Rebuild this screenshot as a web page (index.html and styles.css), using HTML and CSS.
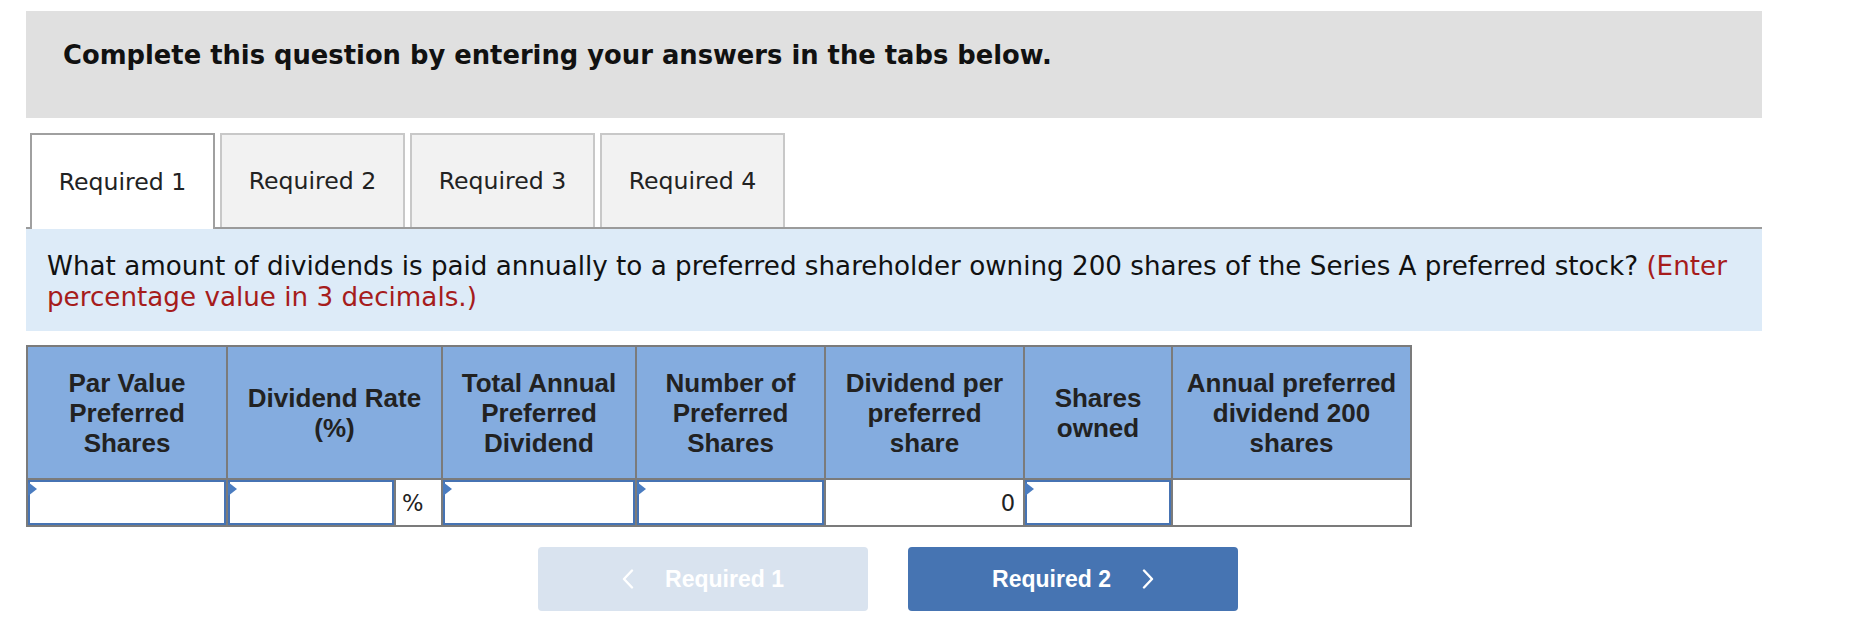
FILE: index.html
```html
<!DOCTYPE html>
<html lang="en">
<head>
<meta charset="utf-8">
<title>Required 1</title>
<link rel="stylesheet" href="styles.css">
</head>
<body>
<div class="page">
  <div class="instructions">Complete this question by entering your answers in the tabs below.</div>
  <div class="tabs">
    <div class="tab active">Required 1</div>
    <div class="tab">Required 2</div>
    <div class="tab">Required 3</div>
    <div class="tab">Required 4</div>
  </div>
  <div class="question">What amount of dividends is paid annually to a preferred shareholder owning 200 shares of the Series A preferred stock? <span class="hint">(Enter percentage value in 3 decimals.)</span></div>
  <table class="grid">
    <colgroup>
      <col class="c1"><col class="c2a"><col class="c2b"><col class="c3"><col class="c4"><col class="c5"><col class="c6"><col class="c7">
    </colgroup>
    <thead>
      <tr>
        <th>Par Value<br>Preferred<br>Shares</th>
        <th colspan="2">Dividend Rate<br>(%)</th>
        <th>Total Annual<br>Preferred<br>Dividend</th>
        <th>Number of<br>Preferred<br>Shares</th>
        <th>Dividend per<br>preferred<br>share</th>
        <th>Shares<br>owned</th>
        <th>Annual preferred<br>dividend 200<br>shares</th>
      </tr>
    </thead>
    <tbody>
      <tr>
        <td><div class="field"></div></td>
        <td><div class="field"></div></td>
        <td class="pct">%</td>
        <td><div class="field"></div></td>
        <td><div class="field"></div></td>
        <td class="num">0</td>
        <td><div class="field"></div></td>
        <td></td>
      </tr>
    </tbody>
  </table>
  <div class="nav">
    <button class="btn prev" type="button"><svg class="chev" width="12" height="20" viewBox="0 0 12 20"><polyline points="10,1.5 2,10 10,18.5" fill="none" stroke="#ffffff" stroke-width="2.4" stroke-linecap="round" stroke-linejoin="round"/></svg><span>Required 1</span></button>
    <button class="btn next" type="button"><span>Required 2</span><svg class="chev" width="12" height="20" viewBox="0 0 12 20"><polyline points="2,1.5 10,10 2,18.5" fill="none" stroke="#ffffff" stroke-width="2.4" stroke-linecap="round" stroke-linejoin="round"/></svg></button>
  </div>
</div>
</body>
</html>
```

FILE: styles.css
```css
html, body {
  margin: 0;
  padding: 0;
  background: #ffffff;
}

body {
  font-family: "DejaVu Sans", Verdana, sans-serif;
  color: #222222;
}

.page {
  margin-left: 26px;
  width: 1736px;
  padding-top: 11px;
}

.instructions {
  background: #e0e0e0;
  height: 107px;
  box-sizing: border-box;
  padding: 29px 37px 0;
  font-size: 25.8px;
  font-weight: bold;
  color: #111111;
}

.tabs {
  display: flex;
  gap: 5px;
  margin-top: 15px;
  padding-left: 4px;
  height: 94px;
  border-bottom: 2px solid #9b9b9b;
}

.tab {
  width: 185px;
  box-sizing: border-box;
  border: 2px solid #c8c8c8;
  border-bottom: none;
  background: #f2f2f2;
  display: flex;
  align-items: center;
  justify-content: center;
  font-size: 23.6px;
  color: #222222;
}

.tab.active {
  background: #ffffff;
  border-color: #a0a0a0;
  margin-bottom: -2px;
}

.question {
  background: #ddebf8;
  padding: 22px 21px 18px;
  font-size: 26.2px;
  line-height: 31px;
  color: #111111;
}

.hint {
  color: #a61c1c;
}

.grid {
  margin-top: 14px;
  border-collapse: collapse;
  table-layout: fixed;
  width: 1384px;
  font-family: "Liberation Sans", Arial, sans-serif;
}

.c1 { width: 200px; }
.c2a { width: 168px; }
.c2b { width: 47px; }
.c3 { width: 194px; }
.c4 { width: 189px; }
.c5 { width: 199px; }
.c6 { width: 148px; }
.c7 { width: 239px; }

.grid th {
  background: #84acdf;
  border: 2px solid #7b7b7b;
  height: 131px;
  padding: 0 6px;
  font-size: 26px;
  line-height: 30px;
  font-weight: bold;
  color: #222222;
  text-align: center;
  vertical-align: middle;
}

.grid td {
  border: 2px solid #7b7b7b;
  height: 45px;
  padding: 0;
  background: #ffffff;
  font-family: "DejaVu Sans", Verdana, sans-serif;
  font-size: 22.6px;
  color: #222222;
}

.field {
  position: relative;
  height: 45px;
  box-sizing: border-box;
  border: 2px solid #4673b3;
  background: #ffffff;
}

.field::before {
  content: "";
  position: absolute;
  left: -2px;
  top: 0;
  border-left: 9px solid #4a7cc0;
  border-top: 7px solid transparent;
  border-bottom: 7px solid transparent;
}

.grid td.num {
  text-align: right;
  padding-right: 8px;
}

.grid td.pct {
  text-align: left;
  padding-left: 6px;
}

.nav {
  display: flex;
  justify-content: center;
  gap: 40px;
  margin-top: 20px;
  padding-right: 12px;
}

.btn {
  width: 330px;
  height: 64px;
  border: none;
  border-radius: 4px;
  display: flex;
  align-items: center;
  justify-content: center;
  gap: 31px;
  font-family: "Liberation Sans", Arial, sans-serif;
  font-size: 23px;
  font-weight: bold;
  color: #ffffff;
  padding: 0;
}

.btn.prev {
  background: #d9e3ef;
}

.btn.next {
  background: #4674b2;
}

.chev {
  display: block;
}
```
